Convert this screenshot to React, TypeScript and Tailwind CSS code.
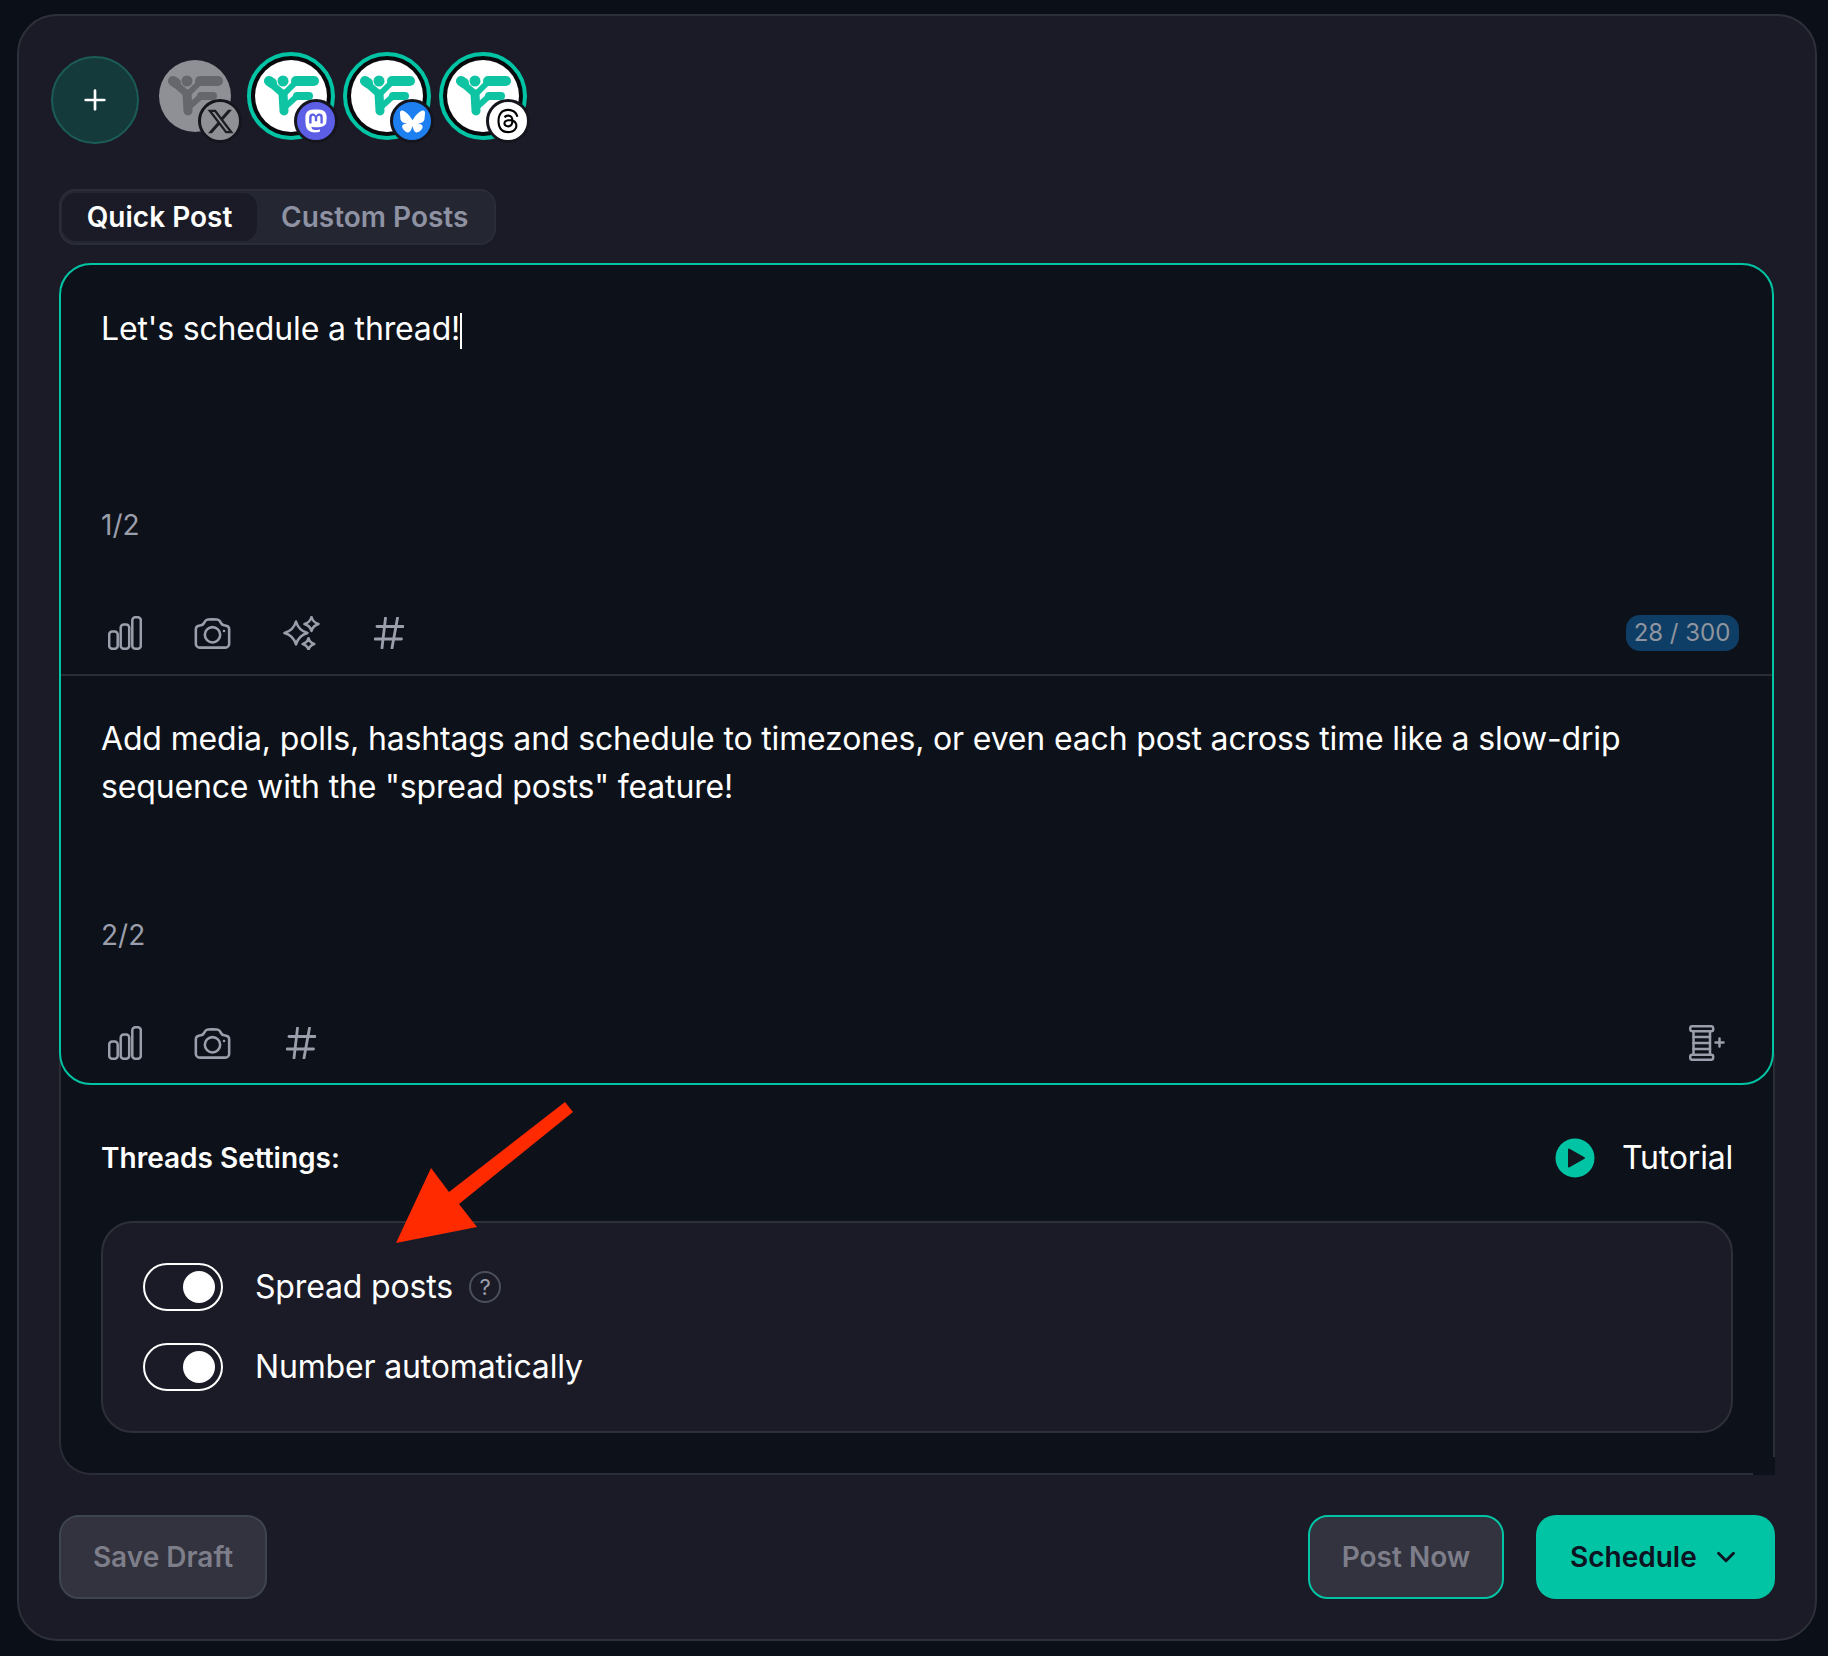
import React from 'react';
import { ChevronDown, Plus } from 'lucide-react';
import { HiOutlineCamera } from 'react-icons/hi2';
import { FaBluesky, FaMastodon, FaThreads, FaXTwitter } from 'react-icons/fa6';

const font = { fontFamily: 'Inter, "Liberation Sans", sans-serif' };

const Logo = ({ color }: { color: string }) => (
  <svg viewBox="0 0 72 72" className="w-full h-full">
    <circle cx="28" cy="21" r="5.5" fill={color} />
    <g stroke={color} strokeLinecap="round" strokeLinejoin="round" fill="none">
      <path d="M13 21 L28 34" strokeWidth="7" />
      <path d="M14 21 L17 23" strokeWidth="10" />
      <path d="M28 34 L29 51" strokeWidth="9" />
      <path d="M28 35 L38 25" strokeWidth="6" />
      <path d="M30 47 L40 38" strokeWidth="6" />
      <path d="M41 21 H59" strokeWidth="10" />
      <path d="M42 36 H54" strokeWidth="8" />
    </g>
  </svg>
);

const Account = ({ active, badge, badgeClass }: { active: boolean; badge: React.ReactNode; badgeClass: string }) => (
  <div className="relative w-[88px] h-[88px] flex items-center justify-center">
    {active && <div className="absolute inset-0 rounded-full border-[4px] border-[#00c4a4] bg-[#08090d]" />}
    <div className={`relative w-[72px] h-[72px] rounded-full ${active ? 'bg-white' : 'bg-[#8f9095]'}`}>
      <Logo color={active ? '#0fc4a3' : '#66676d'} />
    </div>
    <div className={`absolute left-[47px] top-[47px] w-[44px] h-[44px] rounded-full border-[3px] border-[#14151d] flex items-center justify-center ${badgeClass}`}>
      {badge}
    </div>
  </div>
);

const BarsIcon = () => (
  <svg width="34" height="34" viewBox="0 0 34 34" fill="none" stroke="#9b9eab" strokeWidth="2.5">
    <rect x="1.2" y="15.5" width="8.5" height="17.3" rx="3" />
    <rect x="12.7" y="8.5" width="8.5" height="24.3" rx="3" />
    <rect x="24.3" y="1.2" width="8.5" height="31.6" rx="3" />
  </svg>
);

const star = (cx: number, cy: number, r: number) => {
  const k = r * 0.22;
  return `M${cx} ${cy - r} Q${cx + k} ${cy - k} ${cx + r} ${cy} Q${cx + k} ${cy + k} ${cx} ${cy + r} Q${cx - k} ${cy + k} ${cx - r} ${cy} Q${cx - k} ${cy - k} ${cx} ${cy - r}Z`;
};

const SparkleIcon = () => (
  <svg width="37" height="34" viewBox="0 0 37 34" fill="none" stroke="#9b9eab" strokeWidth="2.5" strokeLinejoin="round">
    <path d={star(13, 17, 11.5)} />
    <path d={star(28.5, 8, 7)} />
    <path d={star(25.5, 28, 5.8)} />
  </svg>
);

const HashIcon = () => (
  <svg width="30" height="32" viewBox="0 0 30 32" fill="none" stroke="#9b9eab" strokeWidth="2.8" strokeLinecap="round">
    <path d="M3 9.5H29.5" />
    <path d="M1 22H27.5" />
    <path d="M11.5 1L8 31" />
    <path d="M23.5 1L18 31" />
  </svg>
);

const SpoolIcon = () => (
  <svg width="36" height="36" viewBox="0 0 36 36" fill="none" stroke="#9b9eab" strokeWidth="2.5" strokeLinecap="round" strokeLinejoin="round">
    <rect x="1.2" y="1.2" width="23" height="5" rx="2" />
    <rect x="1.2" y="29.8" width="23" height="5" rx="2" />
    <path d="M4.5 6.2V29.8M21 6.2V29.8" />
    <path d="M4.5 12H21M4.5 18H21M4.5 24H21" />
    <path d="M30.5 13.5V21.5M26.5 17.5H34.5" />
  </svg>
);

const ToolSlot = ({ children }: { children: React.ReactNode }) => (
  <div className="w-[46px] h-[46px] flex items-center justify-center">{children}</div>
);

const Toggle = () => (
  <div className="w-[80px] h-[48px] rounded-full border-2 border-white flex items-center justify-end pr-[6px] shrink-0">
    <div className="w-[32px] h-[32px] rounded-full bg-white" />
  </div>
);

export default function App() {
  return (
    <div className="relative min-h-[1656px] bg-[#0b0f18] pt-[14px] pl-[17px] pr-[11px]" style={font}>
      <div className="rounded-[40px] border-2 border-[#2d2f39] bg-[#1a1b26] pt-[36px] px-[40px] pb-[39px] h-[1627px]">
        {/* Accounts */}
        <div className="flex items-start h-[92px] -ml-[8px]">
          <button className="mt-[4px] w-[88px] h-[88px] rounded-full bg-[#143a3c] border-2 border-[#1c5c58] flex items-center justify-center text-white">
            <Plus size={32} strokeWidth={2} />
          </button>
          <div className="ml-[12px] flex gap-[8px]">
            <Account
              active={false}
              badgeClass="bg-[#8f9095] text-[#1c1d22]"
              badge={<FaXTwitter size={29} />}
            />
            <Account
              active
              badgeClass="bg-[#5c5fe6] text-white"
              badge={<FaMastodon size={26} />}
            />
            <Account
              active
              badgeClass="bg-[#1d7ff0] text-white"
              badge={<FaBluesky size={25} />}
            />
            <Account
              active
              badgeClass="bg-white text-black"
              badge={<FaThreads size={26} />}
            />
          </div>
        </div>

        {/* Tabs */}
        <div className="mt-[45px] w-[437px] h-[56px] rounded-[16px] bg-[#242631] border-2 border-[#2a2c37] flex items-center pl-[1px]">
          <div className="w-[195px] h-[48px] rounded-[14px] bg-[#1a1b26] flex items-center justify-center text-[28px] font-semibold text-white">
            Quick Post
          </div>
          <div className="ml-[24px] text-[28px] font-semibold text-[#8e92a3]">Custom Posts</div>
        </div>

        {/* Editor */}
        <div className="relative z-10 mt-[18px] mr-[1.5px] rounded-[32px] border-2 border-[#00c4a4] bg-[#0d1119] text-white">
          <div className="pt-[40px] pl-[40px] pr-[33px] pb-[18px] border-b-2 border-[#2a2c36]">
            <div className="h-[200px] text-[32px] leading-[48px] tracking-[-0.16px]">
              Let's schedule a thread!
              <span className="inline-block w-[2px] h-[36px] bg-white align-middle" />
            </div>
            <div className="h-[40px] text-[28px] leading-[40px] text-[#9b9eab]">1/2</div>
            <div className="mt-[65px] flex items-center justify-between h-[46px]">
              <div className="flex gap-[42px] ml-[1px]">
                <ToolSlot><BarsIcon /></ToolSlot>
                <ToolSlot><HiOutlineCamera size={41} color="#9b9eab" className="-ml-[1px]" /></ToolSlot>
                <ToolSlot><SparkleIcon /></ToolSlot>
                <ToolSlot><HashIcon /></ToolSlot>
              </div>
              <div className="w-[113px] h-[36px] rounded-[14px] bg-[#0e3d66] flex items-center justify-center text-[24px] text-[#8e959e]">
                28 / 300
              </div>
            </div>
          </div>
          <div className="pt-[39px] pl-[40px] pr-[47px] pb-[17px]">
            <div className="h-[200px] text-[32px] leading-[48px] tracking-[-0.16px]">
              Add media, polls, hashtags and schedule to timezones, or even each post across time like a slow-drip sequence with the "spread posts" feature!
            </div>
            <div className="h-[40px] text-[28px] leading-[40px] text-[#9b9eab]">2/2</div>
            <div className="mt-[65px] flex items-center justify-between h-[46px]">
              <div className="flex gap-[42px] ml-[1px]">
                <ToolSlot><BarsIcon /></ToolSlot>
                <ToolSlot><HiOutlineCamera size={41} color="#9b9eab" className="-ml-[1px]" /></ToolSlot>
                <ToolSlot><HashIcon /></ToolSlot>
              </div>
              <SpoolIcon />
            </div>
          </div>
        </div>

        {/* Settings */}
        <div className="relative -mt-[32px] pt-[85px] px-[40px] pb-[40px] bg-[#0d1119] border-x-2 border-b-2 border-[#2a2c36] rounded-bl-[32px]">
          <div className="flex items-center justify-between h-[40px]">
            <div className="text-[28px] font-semibold text-white">Threads Settings:</div>
            <div className="flex items-center gap-[27px]">
              <svg width="40" height="40" viewBox="0 0 40 40">
                <circle cx="20" cy="20" r="19.5" fill="#00c4a4" />
                <path d="M14 11.5 L29 20 L14 28.5Z" fill="#14161f" stroke="#14161f" strokeWidth="2" strokeLinejoin="round" />
              </svg>
              <span className="text-[32px] text-white tracking-[-0.2px]">Tutorial</span>
            </div>
          </div>
          <div className="mt-[43px] rounded-[32px] border-2 border-[#2d2f39] bg-[#1a1b26] px-[40px] py-[40px] flex flex-col gap-[32px] text-white text-[32px] tracking-[-0.16px]">
            <div className="flex items-center gap-[32px] h-[48px]">
              <Toggle />
              <div className="flex items-center gap-[16px]">
                <span>Spread posts</span>
                <span className="w-[32px] h-[32px] rounded-full border-2 border-[#4b4f5c] flex items-center justify-center text-[22px] text-[#9b9eab]">?</span>
              </div>
            </div>
            <div className="flex items-center gap-[32px] h-[48px]">
              <Toggle />
              <span>Number automatically</span>
            </div>
          </div>
          <div className="absolute -right-[2px] -bottom-[2px] w-[22px] h-[18px] bg-[#0d1119]" />
        </div>

        {/* Footer */}
        <div className="mt-[40px] flex items-center justify-between">
          <button className="w-[208px] h-[84px] rounded-[20px] bg-[#32333e] border-2 border-[#3e4450] text-[28px] font-semibold text-[#7d7e89]">
            Save Draft
          </button>
          <div className="flex items-center gap-[32px]">
            <button className="w-[196px] h-[84px] rounded-[20px] bg-[#32333e] border-2 border-[#00c4a4] text-[28px] font-semibold text-[#7d7e89]">
              Post Now
            </button>
            <button className="w-[239px] h-[84px] rounded-[20px] bg-[#00c4a4] flex items-center pl-[34px] gap-[14px] text-[28px] font-semibold text-[#0c1220]">
              Schedule
              <ChevronDown size={30} strokeWidth={2.3} />
            </button>
          </div>
        </div>
      </div>

      {/* Annotation arrow */}
      <svg className="absolute left-[396px] top-[1102px] z-20" width="178" height="142" viewBox="0 0 178 142">
        <path d="M169 0L177 10L63 102L81 125L0 141L35 66L53 90Z" fill="#ff2a00" />
      </svg>
    </div>
  );
}
